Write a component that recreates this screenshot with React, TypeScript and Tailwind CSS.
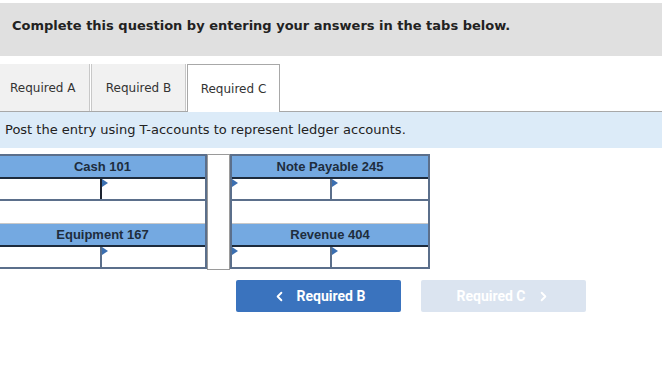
import { ChevronLeft, ChevronRight } from "lucide-react";

const Arrow = () => (
    <span className="absolute left-0 top-0 w-0 h-0 border-y-[4px] border-y-transparent border-l-[6px] border-l-[#3b6fb0]"></span>
);

const HeaderCell = ({ title }: { title: string }) => (
    <div className="h-[23px] bg-[#74a9e1] border-b-2 border-[#1d2b3c] flex items-center justify-center text-[13px] font-bold text-[#1e2d3d]" style={{ fontFamily: '"Liberation Sans", Arial, sans-serif' }}>
        {title}
    </div>
);

const InputRow = ({ split, arrows, dark }: { split: number; arrows: [boolean, boolean]; dark?: boolean }) => (
    <div className="h-[22px] flex border-b-2 border-[#5b6f8b] bg-white">
        <div className="relative h-full" style={{ width: split }}>
            {arrows[0] && <Arrow />}
        </div>
        <div className={`relative h-full flex-1 border-l-2 ${dark ? "border-[#1d2430]" : "border-[#5b6f8b]"}`}>
            {arrows[1] && <Arrow />}
        </div>
    </div>
);

const TAccount = ({ title, split, arrows, dark }: { title: string; split: number; arrows: [boolean, boolean]; dark?: boolean }) => (
    <div>
        <HeaderCell title={title} />
        <InputRow split={split} arrows={arrows} dark={dark} />
    </div>
);

export default function App() {
    return (
        <div className="w-[662px] h-[365px] bg-white overflow-hidden pt-[3px]" style={{ fontFamily: '"DejaVu Sans", Verdana, sans-serif' }}>
            <div className="h-[53px] bg-[#e0e0e0] flex items-center pl-3 pb-[7px]">
                <h1 className="text-[13px] font-bold text-[#222]">Complete this question by entering your answers in the tabs below.</h1>
            </div>

            <div className="mt-[8px] flex h-[48px] border-b border-[#a8a8a8] text-[12px] text-[#333]">
                <div className="w-[90px] bg-[#f1f1f1] border-r border-[#c8c8c8] flex items-center pl-[10px] pt-[1px]">Required A</div>
                <div className="w-[95px] ml-[1px] bg-[#f1f1f1] border-x border-[#c8c8c8] flex items-center justify-center">Required B</div>
                <div className="w-[93px] ml-[1px] bg-white border-x border-t border-[#a8a8a8] -mb-px flex items-center justify-center">Required C</div>
            </div>

            <div className="h-[36px] bg-[#dcebf8] flex items-center pl-[5px] text-[13px] text-[#222]">
                Post the entry using T-accounts to represent ledger accounts.
            </div>

            <div className="mt-[6px] flex items-start">
                <div className="w-[207px] border-r-2 border-[#5b6f8b] border-t-2 border-t-[#5b6f8b]">
                    <TAccount title="Cash 101" split={100} arrows={[false, true]} dark />
                    <div className="h-[23px] bg-white border-b border-[#c8c8c8]"></div>
                    <TAccount title="Equipment 167" split={100} arrows={[false, true]} />
                </div>
                <div className="w-[23px] h-[116px] border border-[#9a9a9a] bg-white"></div>
                <div className="w-[200px] border-x-2 border-[#5b6f8b] border-t-2 border-t-[#5b6f8b]">
                    <TAccount title="Note Payable 245" split={98} arrows={[true, true]} />
                    <div className="h-[23px] bg-white border-b border-[#c8c8c8]"></div>
                    <TAccount title="Revenue 404" split={98} arrows={[true, true]} />
                </div>
            </div>

            <div className="mt-[10px] flex gap-[20px] pl-[236px]" style={{ fontFamily: 'Roboto, sans-serif' }}>
                <button className="w-[165px] h-[32px] rounded-[2px] bg-[#3a73be] text-white text-[14px] font-bold flex items-center justify-center gap-[10px]">
                    <ChevronLeft size={15} strokeWidth={3} />
                    Required B
                </button>
                <button className="w-[165px] h-[32px] rounded-[2px] bg-[#dbe4f0] text-white text-[14px] font-bold flex items-center justify-center gap-[10px]">
                    Required C
                    <ChevronRight size={15} strokeWidth={3} />
                </button>
            </div>
        </div>
    );
}
